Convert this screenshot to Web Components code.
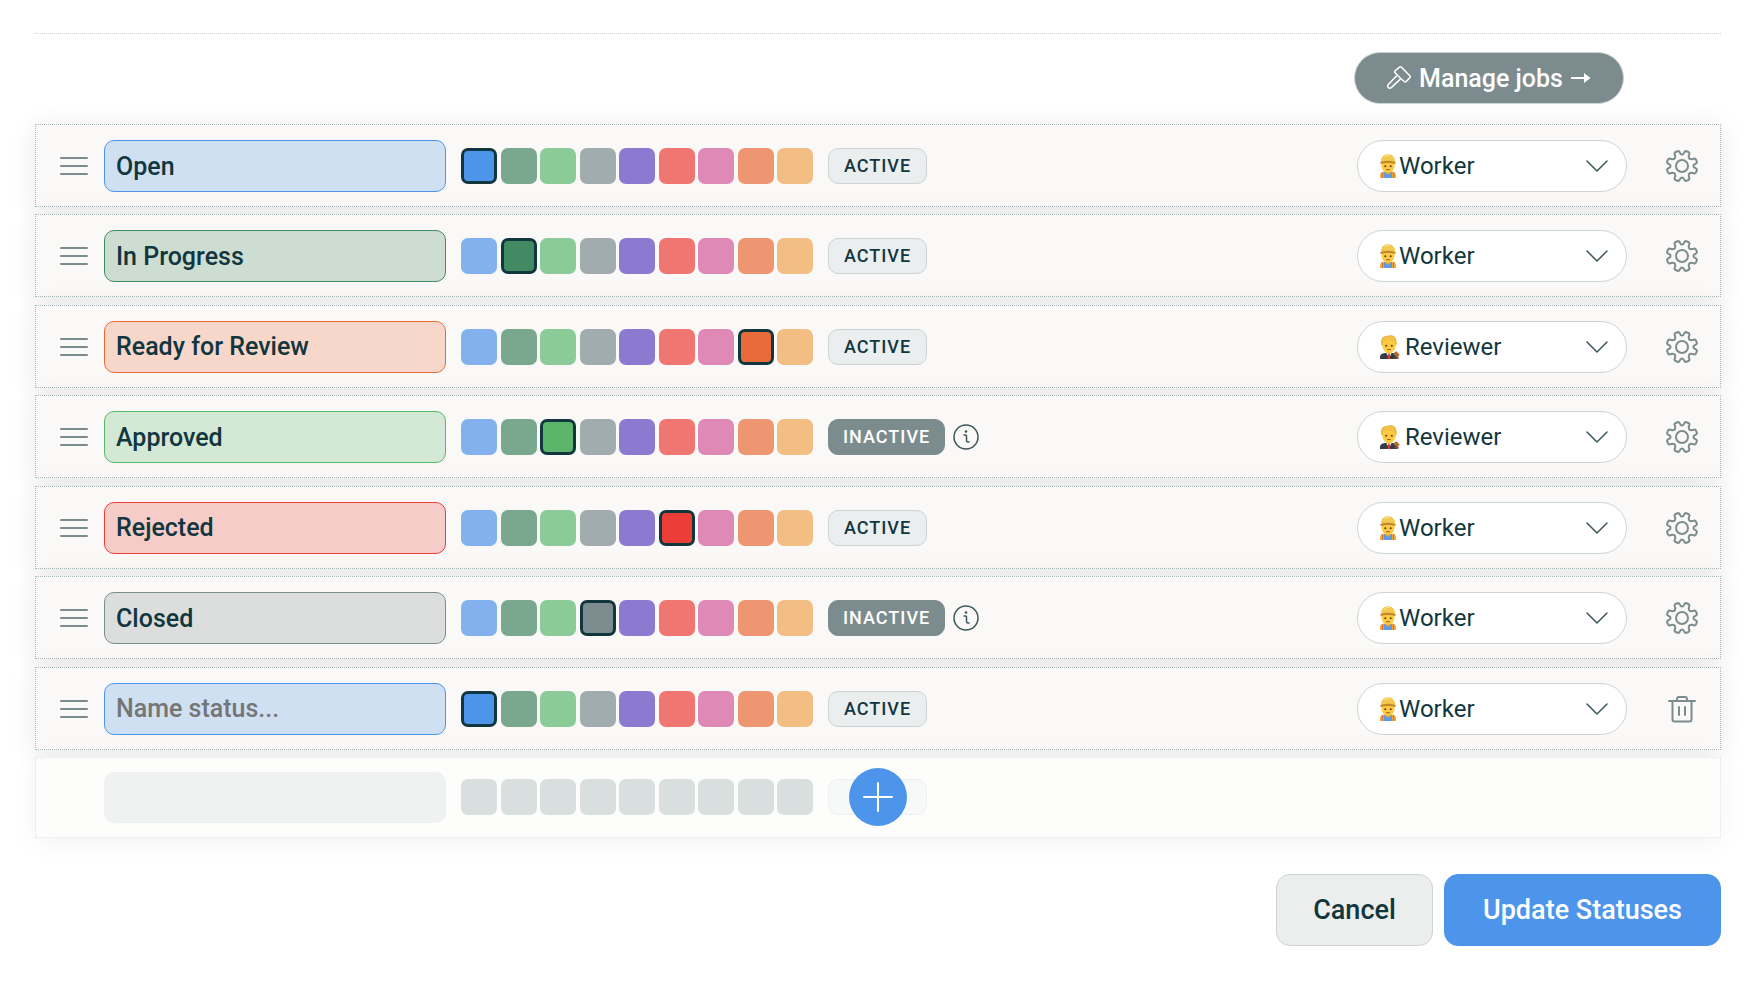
<!DOCTYPE html>
<html lang="en">
<head>
<meta charset="utf-8">
<meta name="viewport" content="width=device-width, initial-scale=1">
<title>Statuses</title>
<style>
  body {
    margin: 0;
    background: #fff;
    color: #12363d;
    font-family: Roboto, sans-serif;
    font-size: 24px;
    --ink: #12363d;
    --slate: #7c8c8e;
    --blue: #4d95ea;
  }
</style>
</head>
<body>
<status-editor>
  <status-row name="Open" color="blue" role-name="Worker"></status-row>
  <status-row name="In Progress" color="green" role-name="Worker"></status-row>
  <status-row name="Ready for Review" color="orange" role-name="Reviewer"></status-row>
  <status-row name="Approved" color="lime" role-name="Reviewer" inactive></status-row>
  <status-row name="Rejected" color="red" role-name="Worker"></status-row>
  <status-row name="Closed" color="gray" role-name="Worker" inactive></status-row>
  <status-row name="" color="blue" role-name="Worker" removable></status-row>
  <status-ghost></status-ghost>
</status-editor>

<script>
  const COLORS = {
    blue:   { full: '#4d95ea', faded: '#82b1ed', tint: '#d0e0f3' },
    green:  { full: '#428a63', faded: '#79a88f', tint: '#cdddd2' },
    lime:   { full: '#5bb66c', faded: '#8bcb97', tint: '#d3e9d5' },
    gray:   { full: '#7c8c8e', faded: '#a1acae', tint: '#dcdedd' },
    purple: { full: '#5b46be', faded: '#8a7bd0', tint: '#d6d1ee' },
    red:    { full: '#ea3e37', faded: '#f07672', tint: '#f6ccc9' },
    pink:   { full: '#d3609d', faded: '#de89b6', tint: '#f3d5e4' },
    orange: { full: '#e96b39', faded: '#ee9672', tint: '#f7d7ca' },
    yellow: { full: '#f1a851', faded: '#f3be84', tint: '#fae6cd' }
  };

  const ICONS = {
    menu: '<svg width="30" height="20" viewBox="0 0 30 20" fill="none" stroke="currentColor" stroke-width="2" stroke-linecap="round"><path d="M2 2h26M2 10h26M2 18h26"/></svg>',
    gear: '<svg width="32" height="32" viewBox="0 0 32 32" fill="none" stroke="currentColor" stroke-width="2" stroke-linejoin="round"><circle cx="16" cy="16" r="6"/><path d="M11.6 1.2Q13 .8 13.7 2.2Q14.5 4.6 16 4.6Q17.5 4.6 18.3 2.2Q19 .8 20.4 1.2L22.4 2Q23.8 2.6 23.3 4.1Q22.2 6.3 23.3 8.7Q25.7 9.8 27.9 8.7Q29.4 8.2 30 9.6L30.8 11.6Q31.2 13 29.8 13.7Q27.4 14.5 27.4 16Q27.4 17.5 29.8 18.3Q31.2 19 30.8 20.4L30 22.4Q29.4 23.8 27.9 23.3Q25.7 22.2 23.3 23.3Q22.2 25.7 23.3 27.9Q23.8 29.4 22.4 30L20.4 30.8Q19 31.2 18.3 29.8Q17.5 27.4 16 27.4Q14.5 27.4 13.7 29.8Q13 31.2 11.6 30.8L9.6 30Q8.2 29.4 8.7 27.9Q9.8 25.7 8.7 23.3Q6.3 22.2 4.1 23.3Q2.6 23.8 2 22.4L1.2 20.4Q.8 19 2.2 18.3Q4.6 17.5 4.6 16Q4.6 14.5 2.2 13.7Q.8 13 1.2 11.6L2 9.6Q2.6 8.2 4.1 8.7Q6.3 9.8 8.7 8.7Q9.8 6.3 8.7 4.1Q8.2 2.6 9.6 2Z"/></svg>',
    trash: '<svg width="32" height="32" viewBox="0 0 32 32" fill="none" stroke="currentColor" stroke-width="2" stroke-linecap="round" stroke-linejoin="round"><path d="M3 8h26M6.500 8v18.500q0 2 2 2h15q2 0 2-2V8M11 8V6q0-2 2-2h6q2 0 2 2v2M13 14v8M19 14v8"/></svg>',
    info: '<svg width="26" height="26" viewBox="0 0 26 26" fill="none" stroke="#3c565a" stroke-width="1.500" stroke-linecap="round"><circle cx="13" cy="13" r="12"/><path d="M11 11h1.500q1 0 1 1v4.500q0 1.500 1.500 1.500h1"/><circle cx="13" cy="7.500" r=".6" fill="#3c565a"/></svg>',
    chevron: '<svg class="chevron" width="24" height="14" viewBox="0 0 24 14" fill="none" stroke="#3c565a" stroke-width="1.500" stroke-linecap="round" stroke-linejoin="round"><path d="M2 2l10 10L22 2"/></svg>',
    hammer: '<svg width="24" height="24" viewBox="0 0 24 24" fill="none" stroke="currentColor" stroke-width="1.500" stroke-linejoin="round"><path d="M12.500 1.200q1-.8 2 0l8.300 8.600q.8 1 0 1.900l-3.600 3.800q-1 .8-2 0l-4.200-3.800-5.200-5.200q-.4-.9.200-1.700zM10.200 9.300L1.300 18.600q-1.200 1.700 0 3 1.500 1.200 3 0l9.300-8.700"/></svg>',
    arrow: '<svg width="20" height="12" viewBox="0 0 20 12" fill="currentColor"><path d="M0 5h13V1l6.500 5L13 11V7H0z"/></svg>',
    plus: '<svg width="30" height="30" viewBox="0 0 30 30" fill="none" stroke="#fff" stroke-width="2" stroke-linecap="round"><path d="M15 1v28M1 15h28"/></svg>'
  };

  // small portraits shown before the role name
  const FACES = {
    Worker: `<svg class="face" width="16" height="24" viewBox="0 0 16 24">
      <path d="M0 24v-3q0-3 4-3.500h8q4 .5 4 3.500v3z" fill="#f4b63c"/>
      <path d="M4 18h8v6H4z" fill="#5b9bea"/>
      <path d="M5.500 16h5v3L8 21l-2.500-2z" fill="#e5a62e"/>
      <path d="M2.500 18.200V24M13.500 18.200V24" stroke="#e26b2d" stroke-width="1.500"/>
      <ellipse cx="8" cy="11.500" rx="6.600" ry="7.300" fill="#fccb3f"/>
      <path d="M.9 8.500Q.6.5 8 .3q7.400.2 7.100 8.200z" fill="#f3c94f"/>
      <path d="M4 3q2-2 5-1.600" stroke="#fde58b" fill="none"/>
      <path d="M.2 8.200Q8 5.300 15.800 8.200l-.5 1.800Q8 8 .7 10z" fill="#c28a2a"/>
      <circle cx="5.300" cy="12.300" r="1" fill="#59391e"/><circle cx="10.700" cy="12.300" r="1" fill="#59391e"/>
      <path d="M6 16q2-.9 4 0" stroke="#a55b23" fill="none"/>
    </svg>`,
    Reviewer: `<svg class="face" width="20" height="24" viewBox="0 0 20 24">
      <path d="M0 24v-2q0-3.500 5-4h8q4 .5 4.500 4v2z" fill="#343b42"/>
      <path d="M6 17h6l-3 6.500z" fill="#fff"/>
      <path d="M8.200 19h1.600l.7 5h-3z" fill="#d53731"/>
      <path d="M6.500 15h5v2.500L9 19.500l-2.500-2z" fill="#e5a62e"/>
      <path d="M1.300 10Q-.2 1.600 6.300 1 14-1.400 16 4q1 3 .5 6z" fill="#e9ae2e"/>
      <ellipse cx="9" cy="10.300" rx="6.800" ry="7.700" fill="#fccb3f"/>
      <path d="M1.800 8Q1.500 2 7 1.500q7.500-1.700 9 4.500-5 1-8.500-.8Q4.500 5.500 1.800 8z" fill="#f4c04a"/>
      <circle cx="6.200" cy="10.800" r="1" fill="#59391e"/><circle cx="11.800" cy="10.800" r="1" fill="#59391e"/>
      <path d="M7 14.800q2-.8 4 0" stroke="#a55b23" fill="none"/>
      <path d="M13 18.500l3.500-2.200 3.200 3.500-2.700 2.700z" fill="#b46a36"/>
      <path d="M12.500 23.200l5-2 2 2.300z" fill="#8c4d28"/>
    </svg>`
  };

  // box, swatch and badge metrics are the same in a status row and in the ghost row
  const ROW_STYLE = `
    :host {
      display: flex;
      align-items: center;
      box-sizing: border-box;
      border: 1px dotted #a9b8ba;
      background: #faf9f7;
      box-shadow: 0 4px 26px rgba(0, 0, 0, .09);
      padding: 15px 20px 14px;
    }
    .name {
      box-sizing: border-box;
      flex: 0 1 342px;
      min-width: 0;
      height: 52px;
      border-radius: 10px;
    }
    .swatches {
      display: flex;
      flex: none;
      justify-content: space-between;
      width: 352px;
      margin: 0 15px;
      padding: 0;
      border: 0;
    }
    .swatch {
      box-sizing: border-box;
      width: 36px;
      height: 36px;
      margin: 0;
      border-radius: 7px;
    }
    .badge {
      box-sizing: border-box;
      flex: none;
      min-width: 99px;
      height: 36px;
      padding: 0 14px;
      border: 1px solid #cdd4d5;
      border-radius: 10px;
      background: #ebeeef;
      color: var(--ink);
      font: 500 18px/34px Roboto, sans-serif;
      letter-spacing: 1px;
    }
  `;

  class StatusRow extends HTMLElement {
    constructor() {
      super();
      this.attachShadow({ mode: 'open' });
    }

    connectedCallback() {
      this.render();
    }

    render() {
      const name = this.getAttribute('name');
      const current = this.getAttribute('color');
      const role = this.getAttribute('role-name');
      const inactive = this.hasAttribute('inactive');
      const removable = this.hasAttribute('removable');
      const color = COLORS[current];

      const swatches = Object.keys(COLORS).map(key => `
        <input class="swatch" type="radio" name="color" value="${key}" aria-label="${key}"
          style="--full: ${COLORS[key].full}; --faded: ${COLORS[key].faded}" ${key === current ? 'checked' : ''}>
      `).join('');

      this.shadowRoot.innerHTML = `
        <style>
          ${ROW_STYLE}
          button { cursor: pointer; }
          .icon {
            display: flex;
            flex: none;
            padding: 0;
            border: 0;
            background: none;
            color: var(--slate);
          }
          .drag { margin: 0 15px 0 3px; cursor: grab; }
          .name {
            padding: 0 11px;
            border: 1px solid ${color.full};
            background: ${color.tint};
            color: var(--ink);
            font: 500 25px Roboto, sans-serif;
          }
          .name::placeholder { color: #757575; opacity: 1; }
          .swatch { appearance: none; background: var(--faded); cursor: pointer; }
          .swatch:checked { border: 3px solid var(--ink); background: var(--full); }
          .badge.off { border-color: var(--slate); background: var(--slate); color: #fff; }
          .info { margin-left: 8px; }
          .role {
            display: grid;
            flex: 0 1 270px;
            align-items: center;
            margin-left: auto;
          }
          .role > * { grid-area: 1 / 1; }
          .role svg { pointer-events: none; z-index: 1; }
          .face { margin-left: 23px; }
          .chevron { justify-self: end; margin-right: 18px; }
          select {
            appearance: none;
            box-sizing: border-box;
            width: 100%;
            height: 52px;
            padding: 0 48px 0 ${role === 'Worker' ? 41 : 47}px;
            border: 1px solid #cdd4d5;
            border-radius: 26px;
            background: #fff;
            color: var(--ink);
            font: 400 24px Roboto, sans-serif;
          }
          .end { margin: 0 2px 0 39px; }
        </style>
        <button class="icon drag" type="button" aria-label="Reorder">${ICONS.menu}</button>
        <input class="name" type="text" aria-label="Status name" placeholder="Name status..." value="${name}">
        <fieldset class="swatches" aria-label="Color">${swatches}</fieldset>
        <button class="badge ${inactive ? 'off' : ''}" type="button">${inactive ? 'INACTIVE' : 'ACTIVE'}</button>
        ${inactive ? `<button class="icon info" type="button" aria-label="About inactive statuses">${ICONS.info}</button>` : ''}
        <div class="role">
          ${FACES[role]}
          <select aria-label="Role">
            <option ${role === 'Worker' ? 'selected' : ''}>Worker</option>
            <option ${role === 'Reviewer' ? 'selected' : ''}>Reviewer</option>
          </select>
          ${ICONS.chevron}
        </div>
        <button class="icon end" type="button" aria-label="${removable ? 'Delete' : 'Settings'}">${removable ? ICONS.trash : ICONS.gear}</button>
      `;
    }
  }

  class StatusGhost extends HTMLElement {
    constructor() {
      super();
      this.attachShadow({ mode: 'open' });
      this.shadowRoot.innerHTML = `
        <style>
          ${ROW_STYLE}
          :host {
            position: relative;
            padding: 14px 20px;
            border-color: #dde2e2;
            background: rgba(253, 253, 251, .8);
            box-shadow: 0 4px 26px rgba(0, 0, 0, .05);
          }
          .name { height: 51px; margin-left: 48px; background: #f0f2f1; }
          .swatch { background: #d9dfdf; }
          .badge { border-color: #edf0f0; background: #f7f9f9; }
          .add {
            position: absolute;
            inset: 0;
            display: flex;
            align-items: center;
            justify-content: center;
            width: 58px;
            height: 58px;
            margin: auto;
            padding: 0;
            border: 0;
            border-radius: 50%;
            background: var(--blue);
            cursor: pointer;
          }
        </style>
        <div class="name"></div>
        <div class="swatches">${'<div class="swatch"></div>'.repeat(9)}</div>
        <div class="badge"></div>
        <button class="add" type="button" aria-label="Add status">${ICONS.plus}</button>
      `;
    }
  }

  class StatusEditor extends HTMLElement {
    constructor() {
      super();
      this.attachShadow({ mode: 'open' });
      this.shadowRoot.innerHTML = `
        <style>
          :host {
            display: flex;
            flex-direction: column;
            box-sizing: border-box;
            min-height: 100vh;
            padding: 33px 41px 36px 35px;
          }
          header {
            display: flex;
            justify-content: flex-end;
            padding: 18px 97px 20px 0;
            border-top: 1px dotted #cdd4d5;
          }
          a {
            display: flex;
            align-items: center;
            justify-content: center;
            gap: 8px;
            box-sizing: border-box;
            width: 270px;
            height: 52px;
            border: 1px solid #cdd4d5;
            border-radius: 26px;
            background: var(--slate);
            color: #fff;
            font-size: 25px;
            font-weight: 500;
            text-decoration: none;
          }
          .list {
            display: flex;
            flex: 1;
            flex-direction: column;
            justify-content: space-between;
            gap: 7px;
          }
          footer {
            display: flex;
            justify-content: flex-end;
            gap: 11px;
            margin-top: 36px;
          }
          footer button {
            min-width: 157px;
            height: 72px;
            padding: 0 36px;
            border: 1px solid #cdd4d5;
            border-radius: 14px;
            background: #ebeeed;
            color: var(--ink);
            font: 500 27px Roboto, sans-serif;
            cursor: pointer;
          }
          footer .primary {
            min-width: 277px;
            border-color: var(--blue);
            background: var(--blue);
            color: #fff;
          }
        </style>
        <header><a href="#jobs">${ICONS.hammer}<span>Manage jobs</span>${ICONS.arrow}</a></header>
        <div class="list"><slot></slot></div>
        <footer>
          <button type="button">Cancel</button>
          <button class="primary" type="submit">Update Statuses</button>
        </footer>
      `;
    }
  }

  customElements.define('status-row', StatusRow);
  customElements.define('status-ghost', StatusGhost);
  customElements.define('status-editor', StatusEditor);
</script>
</body>
</html>
